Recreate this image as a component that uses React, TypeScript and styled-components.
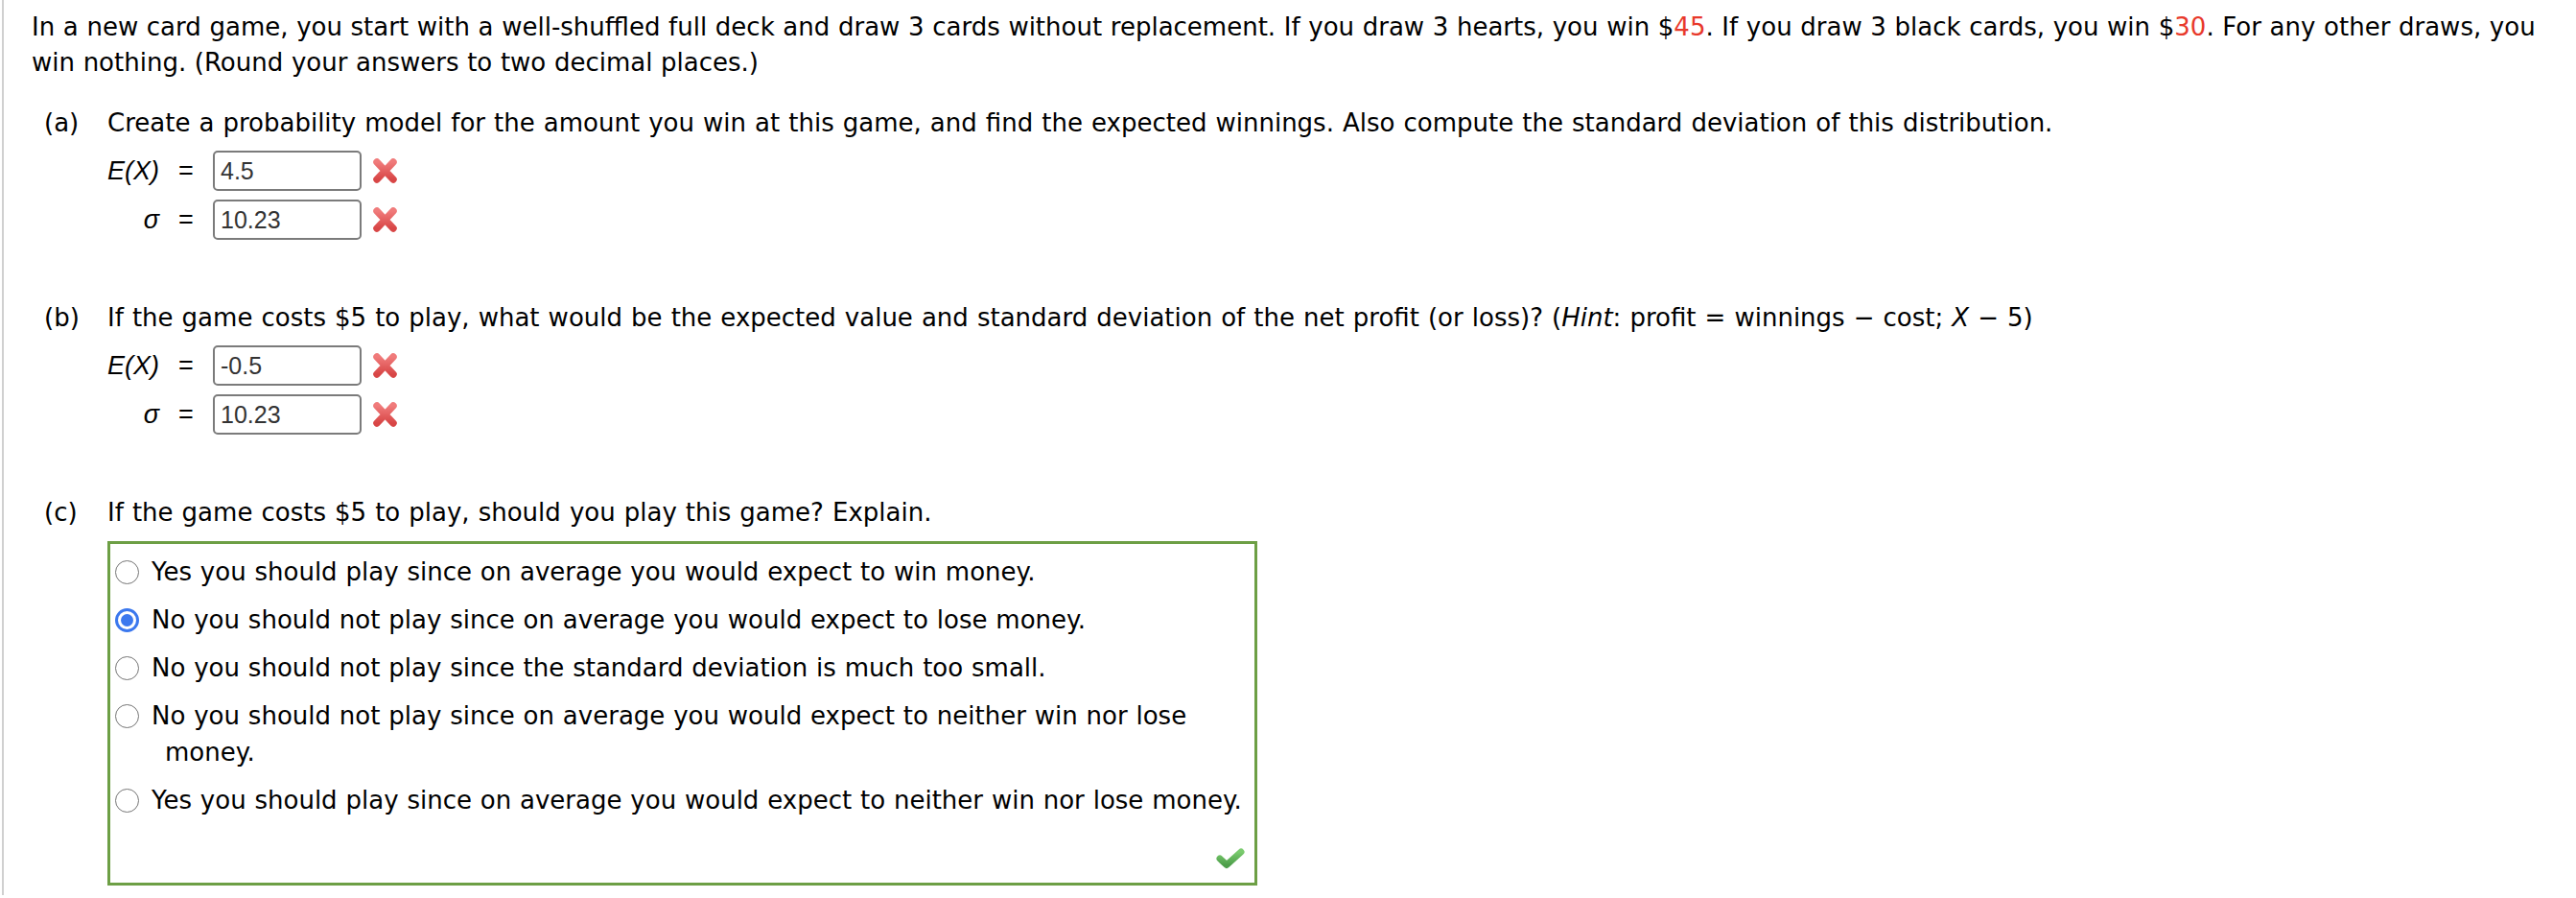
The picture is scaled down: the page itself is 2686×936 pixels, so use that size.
import React, { useId } from 'react'
import styled, { createGlobalStyle } from 'styled-components'

const GlobalStyle = createGlobalStyle`
  html, body {
    margin: 0;
    padding: 0;
    background: #fff;
  }
  body {
    font-family: "DejaVu Sans", Verdana, sans-serif;
    color: #000;
  }
`

const Page = styled.div`
  margin-left: 2px;
  border-left: 2px solid #d0d0d0;
  padding: 10px 0 10px 29px;
  min-height: 910px;
  font-size: 26px;
  line-height: 37px;
  word-spacing: 0.6px;
`

const Intro = styled.div`
  white-space: nowrap;
  word-spacing: 0.4px;
`

const Red = styled.span`
  color: #e8392b;
`

const Part = styled.div<{ $first?: boolean }>`
  margin-top: ${(p) => (p.$first ? '26px' : '63px')};
  padding-left: 13px;
`

const PartHeader = styled.div`
  display: flex;
  white-space: nowrap;
  word-spacing: 0.8px;
`

const PartLabel = styled.span`
  width: 66px;
  flex-shrink: 0;
`

const Answers = styled.div`
  margin: 10px 0 0 66px;
  display: flex;
  flex-direction: column;
  gap: 9px;
`

const AnswerRow = styled.div`
  display: flex;
  align-items: center;
  height: 42px;
  word-spacing: 0;
`

const MathLabel = styled.span`
  width: 54px;
  text-align: right;
  font-family: "Liberation Sans", Arial, sans-serif;
  font-style: italic;
  font-size: 27px;
`

const Eq = styled.span`
  width: 56px;
  text-align: center;
  font-family: "Liberation Sans", Arial, sans-serif;
  font-size: 27px;
`

const Field = styled.div`
  box-sizing: border-box;
  width: 155px;
  height: 42px;
  border: 2px solid #7b7b7b;
  border-radius: 5px;
  padding: 0 6px;
  display: flex;
  align-items: center;
  font-family: "Liberation Sans", Arial, sans-serif;
  font-size: 25px;
  color: #333;
  background: #fff;
`

const WrongMark = styled.svg`
  margin-left: 10px;
  width: 29px;
  height: 28px;
`

const Choices = styled.div`
  box-sizing: border-box;
  width: 1199px;
  margin: 11px 0 0 66px;
  border: 3px solid #6d9f45;
  padding: 10px 0 0 5px;
`

const Option = styled.label`
  display: flex;
  align-items: flex-start;
  line-height: 38px;
  margin-bottom: 12px;
`

const Radio = styled.span<{ $checked?: boolean }>`
  box-sizing: border-box;
  flex-shrink: 0;
  width: 25px;
  height: 25px;
  margin-top: 7px;
  border-radius: 50%;
  background: #fff;
  border: ${(p) => (p.$checked ? '3px solid #3b78ee' : '1.5px solid #767676')};
  display: flex;
  align-items: center;
  justify-content: center;
  &::after {
    content: '';
    display: ${(p) => (p.$checked ? 'block' : 'none')};
    width: 13px;
    height: 13px;
    border-radius: 50%;
    background: #3b78ee;
  }
`

const OptionText = styled.span`
  padding-left: 27px;
  text-indent: -14px;
`

const CheckRow = styled.div`
  display: flex;
  justify-content: flex-end;
  padding: 18px 9px 14px 0;
`

const CheckMark = styled.svg`
  width: 32px;
  height: 23px;
`

const Cross = () => {
  const id = useId()
  return (
    <WrongMark viewBox="0 0 29 28">
      <defs>
        <linearGradient id={id} x1="0" y1="0" x2="0" y2="1">
          <stop offset="0" stopColor="#f07b7b" />
          <stop offset="1" stopColor="#d84646" />
        </linearGradient>
      </defs>
      <path d="M6 5 L23 23 M23 5 L6 23" stroke={`url(#${id})`} strokeWidth="7.5" strokeLinecap="round" fill="none" />
    </WrongMark>
  )
}

const Check = () => {
  const id = useId()
  return (
    <CheckMark viewBox="0 0 32 23">
      <defs>
        <linearGradient id={id} x1="0" y1="0" x2="0" y2="1">
          <stop offset="0" stopColor="#7acb6e" />
          <stop offset="1" stopColor="#4d9e4a" />
        </linearGradient>
      </defs>
      <polyline points="5,12 12,18.5 27,5" stroke={`url(#${id})`} strokeWidth="7" strokeLinecap="round" strokeLinejoin="round" fill="none" />
    </CheckMark>
  )
}

const Answer = ({ label, value }: { label: React.ReactNode; value: string }) => (
  <AnswerRow>
    <MathLabel>{label}</MathLabel>
    <Eq>=</Eq>
    <Field>{value}</Field>
    <Cross />
  </AnswerRow>
)

const options = [
  'Yes you should play since on average you would expect to win money.',
  'No you should not play since on average you would expect to lose money.',
  'No you should not play since the standard deviation is much too small.',
  'No you should not play since on average you would expect to neither win nor lose money.',
  'Yes you should play since on average you would expect to neither win nor lose money.',
]

const App = () => {
  return (
    <>
      <GlobalStyle />
      <Page>
        <Intro>
          In a new card game, you start with a well-shuffled full deck and draw 3 cards without replacement. If you draw 3 hearts, you win $<Red>45</Red>. If you draw 3 black cards, you win $<Red>30</Red>. For any other draws, you
          <br />
          win nothing. (Round your answers to two decimal places.)
        </Intro>

        <Part $first>
          <PartHeader>
            <PartLabel>(a)</PartLabel>
            <span>Create a probability model for the amount you win at this game, and find the expected winnings. Also compute the standard deviation of this distribution.</span>
          </PartHeader>
          <Answers>
            <Answer label="E(X)" value="4.5" />
            <Answer label="σ" value="10.23" />
          </Answers>
        </Part>

        <Part>
          <PartHeader>
            <PartLabel>(b)</PartLabel>
            <span>
              If the game costs $5 to play, what would be the expected value and standard deviation of the net profit (or loss)? (<i>Hint</i>: profit = winnings − cost; <i>X</i> − 5)
            </span>
          </PartHeader>
          <Answers>
            <Answer label="E(X)" value="-0.5" />
            <Answer label="σ" value="10.23" />
          </Answers>
        </Part>

        <Part>
          <PartHeader>
            <PartLabel>(c)</PartLabel>
            <span>If the game costs $5 to play, should you play this game? Explain.</span>
          </PartHeader>
          <Choices>
            {options.map((text, i) => (
              <Option key={i}>
                <Radio $checked={i === 1} />
                <OptionText>{text}</OptionText>
              </Option>
            ))}
            <CheckRow>
              <Check />
            </CheckRow>
          </Choices>
        </Part>
      </Page>
    </>
  )
}

export default App
